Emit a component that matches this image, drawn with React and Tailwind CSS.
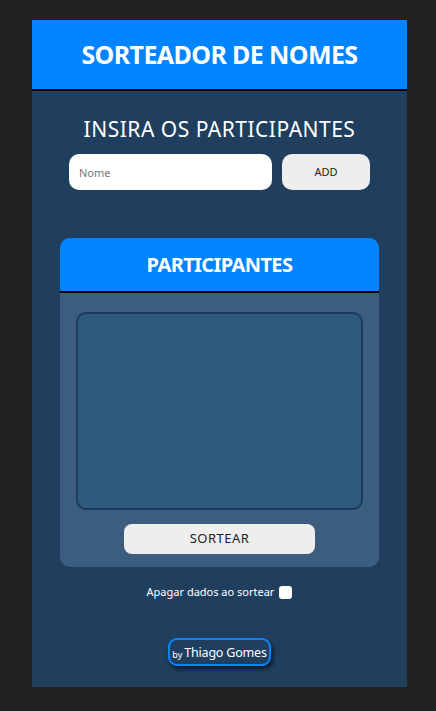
export default function App() {
  const font = { fontFamily: '"Noto Sans", "Open Sans", sans-serif' };
  return (
    <div className="min-h-[711px] bg-[#212121] pt-5 px-8" style={font}>
      <div className="w-[375px] h-[667px] bg-[#203f5e] flex flex-col items-center">
        <div className="w-full h-[71px] bg-[#0084ff] border-b-2 border-black flex items-center justify-center">
          <h1 className="text-white font-bold text-[25px] tracking-[-0.6px] leading-none">SORTEADOR DE NOMES</h1>
        </div>
        <h2 className="mt-[27px] text-white text-[21px] tracking-[0.5px] leading-[22px] font-normal">INSIRA OS PARTICIPANTES</h2>
        <div className="mt-[14px] flex gap-[10px]">
          <input
            placeholder="Nome"
            className="w-[203px] h-[36px] bg-white rounded-[10px] px-[10px] text-[11px] text-black placeholder:text-[#777] outline-none"
          />
          <button className="w-[88px] h-[36px] bg-[#eeeeee] rounded-[10px] text-[11px] text-[#222]">ADD</button>
        </div>
        <div className="mt-[48px] w-[319px] h-[329px] bg-[#3d5d7e] rounded-[10px] overflow-hidden flex flex-col items-center">
          <div className="w-full h-[55px] bg-[#0084ff] border-b-2 border-black flex items-center justify-center">
            <h3 className="text-white font-bold text-[20px] tracking-[-0.6px] leading-none">PARTICIPANTES</h3>
          </div>
          <div className="mt-[19px] w-[287px] h-[198px] bg-[#2d5a7d] border-2 border-[#1e3a5f] rounded-[10px]"></div>
          <button className="mt-[14px] w-[191px] h-[30px] bg-[#eeeeee] rounded-[8px] text-[13px] text-[#222] tracking-[0.5px]">SORTEAR</button>
        </div>
        <label className="mt-[17px] flex items-center gap-[5px] text-white text-[11px]">
          <span>Apagar dados ao sortear</span>
          <span className="w-[13px] h-[13px] bg-white rounded-[3px] inline-block"></span>
        </label>
        <div className="mt-[37px] h-[28px] px-[2px] flex items-end pb-[4px] border-2 border-[#0a84ff] rounded-[9px] shadow-[2px_3px_4px_rgba(0,0,0,0.6)] text-white">
          <span className="text-[9px] leading-none mr-[2px] mb-[1px]">by</span>
          <span className="text-[12.5px] leading-none tracking-[-0.2px]">Thiago Gomes</span>
        </div>
      </div>
    </div>
  );
}
